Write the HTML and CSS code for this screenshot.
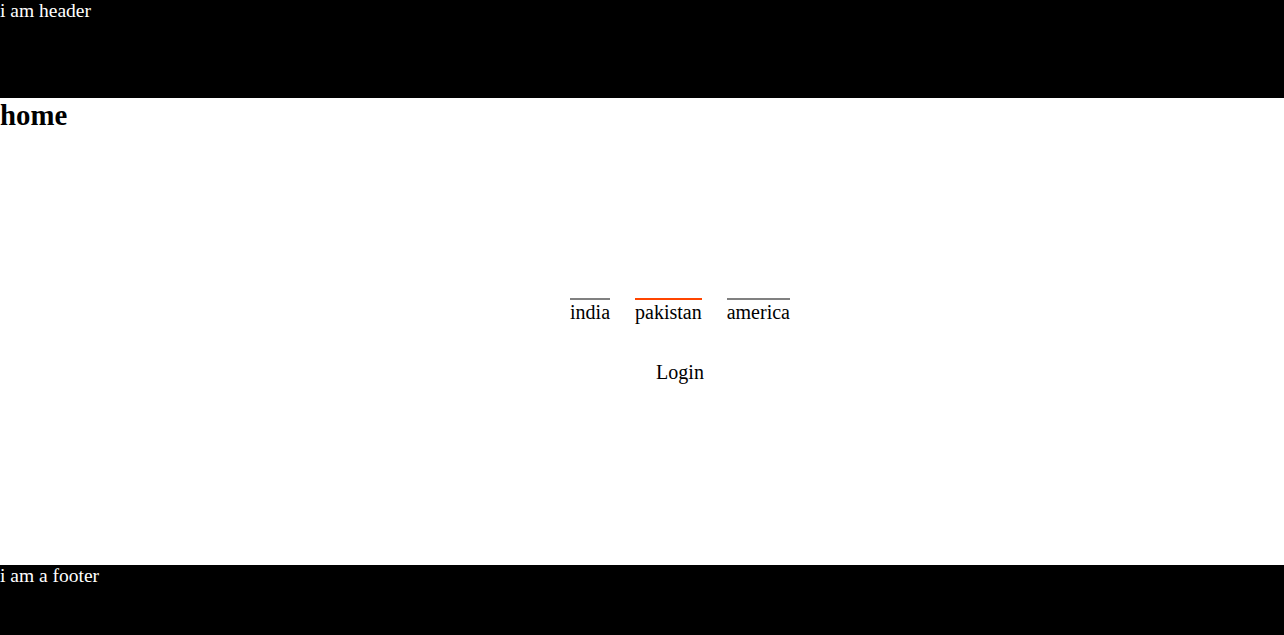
FILE: index.html
```html
<!DOCTYPE html>
<html>
<head>
<meta charset="utf-8">
<link rel="stylesheet" href="styles.css">
</head>
<body>
<div class="page">
  <header class="header">i am header</header>
  <main class="main">
    <h2 class="title">home</h2>
    <div class="center">
      <nav class="tabs">
        <span class="tab">india</span>
        <span class="tab active">pakistan</span>
        <span class="tab">america</span>
      </nav>
      <div class="login">Login</div>
    </div>
  </main>
  <footer class="footer">i am a footer</footer>
</div>
</body>
</html>
```

FILE: styles.css
```css
html, body {
  margin: 0;
  padding: 0;
  height: 100%;
}
body {
  font-family: "Liberation Serif", "Times New Roman", serif;
  font-size: 19.2px;
  color: #000;
  background: #fff;
}
.page {
  display: flex;
  flex-direction: column;
  height: 635px;
}
.header {
  background: #000;
  color: #fff;
  height: 98px;
  font-size: 19.5px;
  line-height: 22px;
}
.main {
  flex: 1;
  display: flex;
  flex-direction: column;
}
.title {
  margin: 0;
  font-size: 28.8px;
  font-weight: bold;
  line-height: 34px;
}
.center {
  margin-top: 166px;
  margin-left: 76px;
  display: flex;
  flex-direction: column;
  align-items: center;
  font-size: 20px;
}
.tabs {
  display: flex;
  gap: 25px;
}
.tab {
  border-top: 2px solid #808080;
  line-height: 24px;
}
.tab.active {
  border-top-color: #ff4500;
}
.login {
  margin-top: 35px;
  line-height: 26px;
}
.footer {
  background: #000;
  color: #fff;
  height: 70px;
  font-size: 19.5px;
  line-height: 22px;
}
```
